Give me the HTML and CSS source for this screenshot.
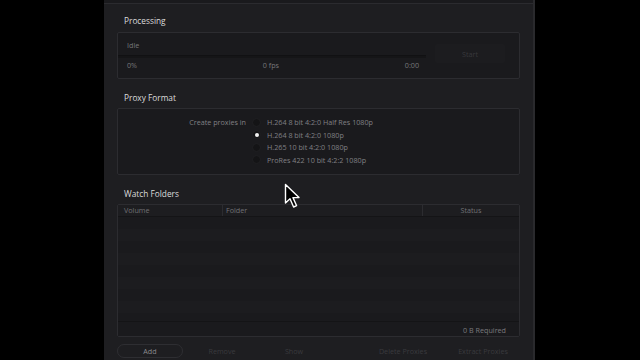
FILE: index.html
```html
<!DOCTYPE html>
<html lang="en">
<head>
    <meta charset="UTF-8">
    <title>Proxy Generator</title>
    <link rel="stylesheet" href="styles.css">
</head>
<body>
    <div class="window">
        <div class="topbar"></div>

        <h3 class="section-title">Processing</h3>
        <div class="box processing">
            <div class="progress">
                <div class="status">Idle</div>
                <div class="track"></div>
                <div class="stats">
                    <span>0%</span>
                    <span>0 fps</span>
                    <span>0:00</span>
                </div>
            </div>
            <button class="btn btn-start">Start</button>
        </div>

        <h3 class="section-title">Proxy Format</h3>
        <div class="box proxy">
            <div class="proxy-label">Create proxies in</div>
            <div class="options">
                <label class="option"><span class="radio"></span>H.264 8 bit 4:2:0 Half Res 1080p</label>
                <label class="option"><span class="radio checked"></span>H.264 8 bit 4:2:0 1080p</label>
                <label class="option"><span class="radio"></span>H.265 10 bit 4:2:0 1080p</label>
                <label class="option"><span class="radio"></span>ProRes 422 10 bit 4:2:2 1080p</label>
            </div>
        </div>

        <h3 class="section-title">Watch Folders</h3>
        <div class="box table">
            <div class="thead">
                <div class="col col-volume">Volume</div>
                <div class="col col-folder">Folder</div>
                <div class="col col-status">Status</div>
            </div>
            <div class="tbody">
                <div class="row"></div>
                <div class="row"></div>
                <div class="row"></div>
                <div class="row"></div>
                <div class="row"></div>
                <div class="row"></div>
                <div class="row"></div>
                <div class="row"></div>
                <div class="row"></div>
            </div>
            <div class="tfoot">0 B Required</div>
        </div>

        <div class="actions">
            <button class="btn btn-add">Add</button>
            <button class="btn btn-faint">Remove</button>
            <button class="btn btn-faint">Show</button>
            <span class="spacer"></span>
            <button class="btn btn-faint btn-wide">Delete Proxies</button>
            <button class="btn btn-faint btn-wide">Extract Proxies</button>
        </div>

        <svg class="cursor" width="17" height="27" viewBox="0 0 17 27">
            <path d="M1.5 1.5 L1.5 20 L6 15.8 L9.6 24 L12.6 22.7 L9 14.6 L15 14.6 Z"
                  fill="#000" stroke="#fff" stroke-width="1.4" stroke-linejoin="round"/>
        </svg>
    </div>
</body>
</html>
```
FILE: styles.css
```css
* { margin: 0; padding: 0; box-sizing: border-box; }
body {
    font-family: 'Open Sans', 'Liberation Sans', sans-serif;
    background-color: #000;
    height: 360px;
    overflow: hidden;
}
.window {
    position: relative;
    width: 431px;
    height: 360px;
    margin-left: 104px;
    background-color: #1e1e21;
    border-right: 2px solid #2a2a2d;
    padding: 0 13px;
    display: flex;
    flex-direction: column;
}
.topbar {
    height: 4px;
    margin: 0 -13px;
    background-color: #1a1a1d;
    border-bottom: 1px solid #2b2b2f;
}
.section-title {
    font-size: 8.3px;
    font-weight: 400;
    color: #dcdcdc;
    line-height: 12px;
    padding: 11px 0 0 7px;
    margin-bottom: 5px;
}
.box + .section-title { padding-top: 13px; margin-bottom: 4px; }
.box {
    background-color: #1a1a1d;
    border: 1px solid #2c2c30;
    border-radius: 2px;
}

/* processing */
.processing {
    height: 47px;
    display: flex;
    align-items: flex-start;
    padding: 6px 14px 0 9px;
    gap: 16px;
}
.progress { width: 292px; font-size: 7.2px; color: #77777a; }
.status { line-height: 13px; }
.track {
    height: 3px;
    margin: 3px -7px 1px -9px;
    background-color: #151517;
    border-top: 1px solid #111113;
}
.stats {
    display: flex;
    justify-content: space-between;
    line-height: 12px;
}
.btn {
    font-family: inherit;
    font-size: 7.2px;
    background: none;
    border: none;
    color: #3d3d41;
    line-height: 14px;
}
.btn-start {
    margin-top: 5px;
    width: 70px;
    height: 19px;
    background-color: #1c1c1f;
    border-radius: 2px;
    color: #38383c;
}

/* proxy format */
.proxy {
    height: 67px;
    display: flex;
    padding-top: 7px;
    font-size: 7.2px;
    color: #808084;
}
.proxy-label { width: 128px; text-align: right; line-height: 13px; }
.options { display: flex; flex-direction: column; margin-left: 6px; }
.option {
    display: flex;
    align-items: center;
    line-height: 12.5px;
    gap: 6px;
}
.radio {
    width: 9px;
    height: 9px;
    border-radius: 50%;
    background-color: #141416;
    border: 1px solid #1f1f22;
}
.radio.checked {
    position: relative;
}
.radio.checked::after {
    content: "";
    position: absolute;
    left: 1.5px;
    top: 1.5px;
    width: 4px;
    height: 4px;
    border-radius: 50%;
    background-color: #f2f2f2;
}

/* watch folders */
.table {
    height: 133px;
    display: flex;
    flex-direction: column;
    font-size: 7.2px;
    color: #717175;
}
.thead {
    display: flex;
    height: 12px;
    line-height: 11px;
    background-color: #1d1d20;
    border-bottom: 1px solid #141416;
}
.col { padding-left: 6px; }
.col-volume { width: 104px; }
.col-folder { width: 200px; border-left: 1px solid #2c2c30; padding-left: 3px; }
.col-status { flex: 1; border-left: 1px solid #2c2c30; text-align: center; padding-left: 0; }
.tbody { flex: 1; overflow: hidden; }
.row { height: 12px; }
.row:nth-child(even) { background-color: #1c1c1f; }
.tfoot {
    height: 15px;
    line-height: 16px;
    text-align: right;
    padding-right: 13px;
    border-top: 1px solid #141416;
    background-color: #1a1a1d;
    color: #7a7a7e;
}

/* buttons */
.actions {
    display: flex;
    align-items: center;
    gap: 6px;
    margin-top: 6px;
    height: 16px;
}
.actions .btn { width: 66px; height: 14px; }
.actions .btn-wide { width: 74px; }
.btn-add {
    border: 1px solid #2e2e32;
    border-radius: 8px;
    color: #8a8a8e;
    line-height: 12px;
}
.btn-faint { color: #3a3a3e; }
.spacer { flex: 1; }

.cursor {
    position: absolute;
    left: 180px;
    top: 183px;
}
```
